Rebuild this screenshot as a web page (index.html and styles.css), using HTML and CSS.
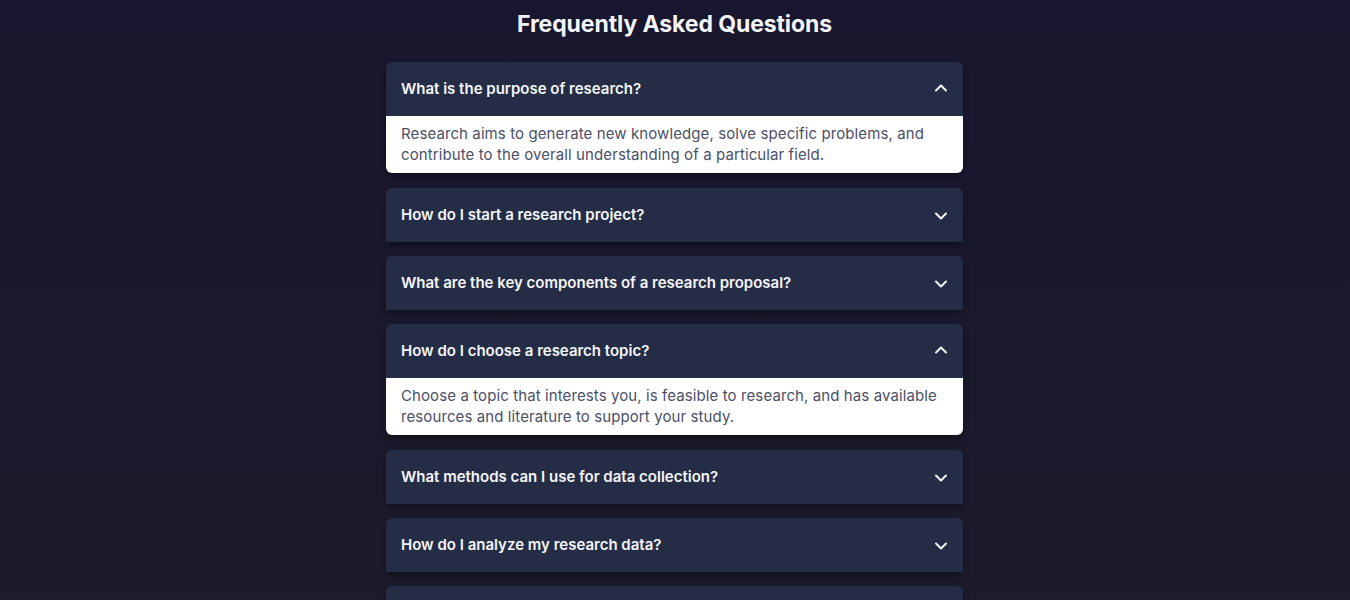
FILE: index.html
```html
<!DOCTYPE html>
<html lang="en">
<head>
  <meta charset="UTF-8" />
  <meta name="viewport" content="width=device-width, initial-scale=1.0"/>
  <title>Research FAQ</title>
  <link rel="stylesheet" href="styles.css">
</head>
<body>
  <h1>Frequently Asked Questions</h1>

  <div class="faq">
    <div class="item open">
      <div class="question">What is the purpose of research?<svg class="chev" viewBox="0 0 12 8"><path d="M1 6.5L6 1.5L11 6.5"/></svg></div>
      <div class="answer">Research aims to generate new knowledge, solve specific problems, and contribute to the overall understanding of a particular field.</div>
    </div>

    <div class="item">
      <div class="question">How do I start a research project?<svg class="chev" viewBox="0 0 12 8"><path d="M1 1.5L6 6.5L11 1.5"/></svg></div>
    </div>

    <div class="item">
      <div class="question">What are the key components of a research proposal?<svg class="chev" viewBox="0 0 12 8"><path d="M1 1.5L6 6.5L11 1.5"/></svg></div>
    </div>

    <div class="item open">
      <div class="question">How do I choose a research topic?<svg class="chev" viewBox="0 0 12 8"><path d="M1 6.5L6 1.5L11 6.5"/></svg></div>
      <div class="answer">Choose a topic that interests you, is feasible to research, and has available resources and literature to support your study.</div>
    </div>

    <div class="item">
      <div class="question">What methods can I use for data collection?<svg class="chev" viewBox="0 0 12 8"><path d="M1 1.5L6 6.5L11 1.5"/></svg></div>
    </div>

    <div class="item">
      <div class="question">How do I analyze my research data?<svg class="chev" viewBox="0 0 12 8"><path d="M1 1.5L6 6.5L11 1.5"/></svg></div>
    </div>

    <div class="item">
      <div class="question">How do I write a literature review?<svg class="chev" viewBox="0 0 12 8"><path d="M1 1.5L6 6.5L11 1.5"/></svg></div>
    </div>
  </div>
</body>
</html>
```

FILE: styles.css
```css
:root {
  --bg-top: #19162f;
  --bg-bottom: #1c1c2b;
  --card: #252c46;
  --text: #f4f5f8;
  --answer: #4b5068;
}

html {
  background: linear-gradient(var(--bg-top), var(--bg-bottom));
  min-height: 100%;
}

body {
  margin: 0 1px 0 0;
  font-family: Inter, "Noto Sans", sans-serif;
  color: var(--text);
}

h1 {
  margin: 10px 0 24px;
  font-size: 23px;
  line-height: 28px;
  font-weight: 700;
  text-align: center;
  letter-spacing: -0.1px;
}

.faq {
  width: 577px;
  margin: 0 auto;
  display: flex;
  flex-direction: column;
  gap: 14px;
}

.item {
  border-radius: 6px;
  box-shadow: 0 4px 6px rgba(0, 0, 0, 0.35);
}

.question {
  display: flex;
  justify-content: space-between;
  align-items: center;
  height: 54px;
  box-sizing: border-box;
  padding: 0 16px 2px 15px;
  background: var(--card);
  border-radius: 6px 6px 0 0;
  font-size: 15px;
  font-weight: 600;
}

.chev {
  width: 12px;
  height: 8px;
  fill: none;
  stroke: var(--text);
  stroke-width: 2;
  stroke-linecap: round;
  stroke-linejoin: round;
}

.item:not(.open) .chev {
  margin-top: 4px;
}

.answer {
  background: #fff;
  color: var(--answer);
  padding: 7px 15px 8px;
  font-size: 15px;
  line-height: 21px;
  letter-spacing: 0.1px;
  border-radius: 0 0 6px 6px;
}

.item.open {
  margin-bottom: 1px;
}
```
